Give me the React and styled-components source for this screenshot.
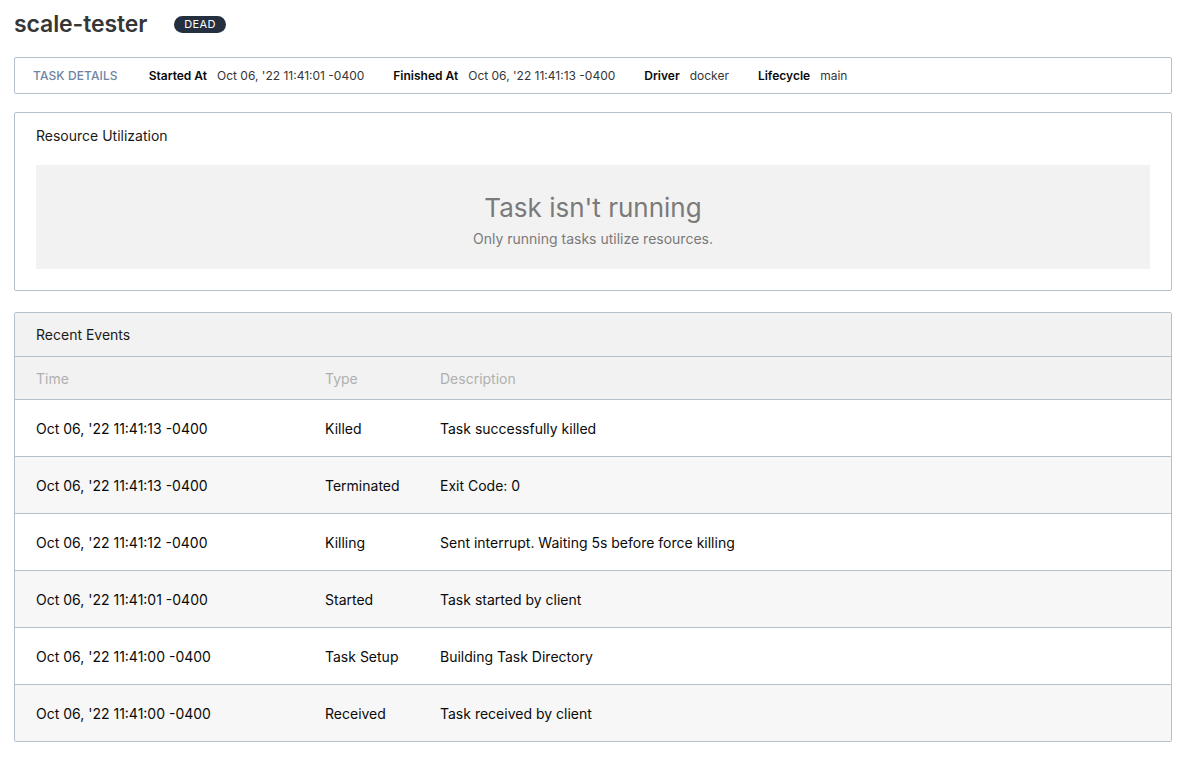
import React from "react";
import styled, { createGlobalStyle } from "styled-components";

const GlobalStyle = createGlobalStyle`
  html, body {
    margin: 0;
    padding: 0;
    background: #ffffff;
    font-family: Inter, "Noto Sans", "Liberation Sans", sans-serif;
    color: #0a0a0a;
  }
`;

const Page = styled.div`
  padding: 10px 8px 16px 14px;
`;

const TitleRow = styled.div`
  display: flex;
  align-items: center;
  gap: 27px;
  height: 28px;
  margin-bottom: 19px;
`;

const Title = styled.h1`
  margin: 0;
  font-size: 23px;
  font-weight: 600;
  color: #363636;
  letter-spacing: -0.1px;
`;

const Badge = styled.span`
  display: inline-flex;
  align-items: center;
  height: 17px;
  padding: 0 10px;
  border-radius: 9px;
  background: #242f40;
  color: #ffffff;
  font-size: 11px;
  letter-spacing: 0.3px;
`;

const DetailsBar = styled.div`
  display: flex;
  align-items: center;
  height: 35px;
  border: 1px solid #b6c0cd;
  border-radius: 2px;
  padding: 0 18px;
  font-size: 12px;
  margin-bottom: 18px;
`;

const DetailsHeading = styled.span`
  color: #6e84a3;
  font-weight: 500;
  text-transform: uppercase;
  letter-spacing: 0.1px;
  margin-right: 31px;
`;

const DetailItem = styled.span`
  margin-right: 29px;
  white-space: nowrap;
  color: #363636;
`;

const DetailLabel = styled.strong`
  font-weight: 600;
  color: #0a0a0a;
  margin-right: 10px;
`;

const Box = styled.section`
  border: 1px solid #b6c0cd;
  border-radius: 2px;
  margin-bottom: 21px;
  overflow: hidden;
`;

const BoxHead = styled.div`
  padding: 14px 21px 0;
  font-size: 14px;
  line-height: 17px;
  color: #1a1a1a;
`;

const BoxBody = styled.div`
  padding: 21px 21px 21px;
`;

const Empty = styled.div`
  background: #f2f2f2;
  height: 104px;
  display: flex;
  flex-direction: column;
  align-items: center;
  justify-content: center;
  color: #7a7a7a;
`;

const EmptyTitle = styled.div`
  font-size: 26px;
  line-height: 32px;
  margin-top: 4px;
`;

const EmptyText = styled.div`
  font-size: 14px;
  margin-top: 6px;
`;

const EventsHead = styled.div`
  height: 43px;
  display: flex;
  align-items: center;
  padding: 0 21px;
  background: #f2f2f2;
  border-bottom: 1px solid #b6c0cd;
  font-size: 14px;
  color: #1a1a1a;
`;

const Table = styled.table`
  width: 100%;
  border-collapse: collapse;
  table-layout: fixed;
  font-size: 14px;
`;

const Th = styled.th`
  text-align: left;
  font-weight: 400;
  color: #b0b0b0;
  height: 42px;
  padding: 0 0 0 ${p => p.$pl || 0}px;
  background: #f2f2f2;
  border-bottom: 1px solid #b6c0cd;
  width: ${p => p.$w || "auto"};
`;

const Tr = styled.tr`
  background: ${p => (p.$alt ? "#f7f7f7" : "#ffffff")};
  border-bottom: ${p => (p.$last ? "none" : "1px solid #b6c0cd")};
`;

const Td = styled.td`
  height: 56px;
  padding: 0 0 0 ${p => p.$pl || 0}px;
  color: #0a0a0a;
`;

const events = [
  ["Oct 06, '22 11:41:13 -0400", "Killed", "Task successfully killed"],
  ["Oct 06, '22 11:41:13 -0400", "Terminated", "Exit Code: 0"],
  ["Oct 06, '22 11:41:12 -0400", "Killing", "Sent interrupt. Waiting 5s before force killing"],
  ["Oct 06, '22 11:41:01 -0400", "Started", "Task started by client"],
  ["Oct 06, '22 11:41:00 -0400", "Task Setup", "Building Task Directory"],
  ["Oct 06, '22 11:41:00 -0400", "Received", "Task received by client"],
];

export default function App() {
  return (
    <Page>
      <GlobalStyle />
      <TitleRow>
        <Title>scale-tester</Title>
        <Badge>DEAD</Badge>
      </TitleRow>

      <DetailsBar>
        <DetailsHeading>Task Details</DetailsHeading>
        <DetailItem><DetailLabel>Started At</DetailLabel>Oct 06, '22 11:41:01 -0400</DetailItem>
        <DetailItem><DetailLabel>Finished At</DetailLabel>Oct 06, '22 11:41:13 -0400</DetailItem>
        <DetailItem><DetailLabel>Driver</DetailLabel>docker</DetailItem>
        <DetailItem><DetailLabel>Lifecycle</DetailLabel>main</DetailItem>
      </DetailsBar>

      <Box>
        <BoxHead>Resource Utilization</BoxHead>
        <BoxBody>
          <Empty>
            <EmptyTitle>Task isn't running</EmptyTitle>
            <EmptyText>Only running tasks utilize resources.</EmptyText>
          </Empty>
        </BoxBody>
      </Box>

      <Box>
        <EventsHead>Recent Events</EventsHead>
        <Table>
          <thead>
            <tr>
              <Th $pl={21} $w="289px">Time</Th>
              <Th $w="115px">Type</Th>
              <Th>Description</Th>
            </tr>
          </thead>
          <tbody>
            {events.map((e, i) => (
              <Tr key={i} $alt={i % 2 === 1} $last={i === events.length - 1}>
                <Td $pl={21}>{e[0]}</Td>
                <Td>{e[1]}</Td>
                <Td>{e[2]}</Td>
              </Tr>
            ))}
          </tbody>
        </Table>
      </Box>
    </Page>
  );
}
